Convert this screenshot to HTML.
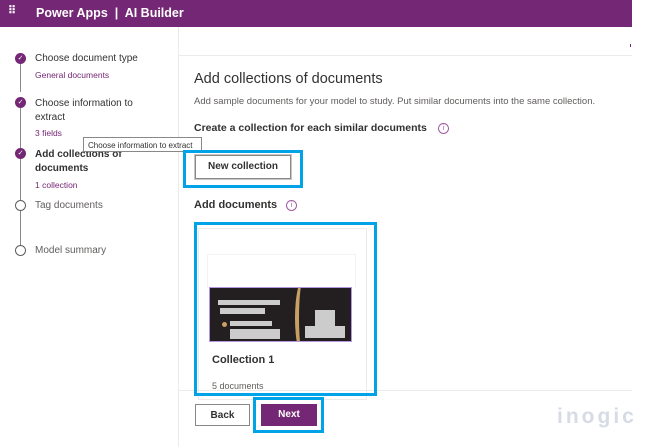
<!DOCTYPE html><html><head><style>
body{margin:0;width:660px;height:447px;background:#fff;font-family:"Liberation Sans",sans-serif;position:relative;overflow:hidden;color:#323130}
.a{position:absolute}
.hdr{left:0;top:0;width:632px;height:27px;background:#742774;color:#fff;font-size:12.5px;font-weight:bold}
.s{font-size:10px;color:#323130}
.sub{font-size:8.5px;color:#742774}
.dot{width:11px;height:11px;border-radius:50%;background:#742774;color:#fff;font-size:7px;text-align:center;line-height:11px}
.ring{width:9px;height:9px;border-radius:50%;border:1px solid #605e5c;background:#fff}
.vl{width:1px;background:#8a8886}
.box{border:3px solid #00a2e8;box-sizing:border-box}
.info{width:9px;height:9px;border:1px solid #a05aa0;border-radius:50%;font-size:7px;color:#a05aa0;text-align:center;line-height:9px}
</style></head><body>
<div class="a hdr"><span class="a" style="left:8px;top:4px;font-size:11px;letter-spacing:-1px">⠿</span><span class="a" style="left:36px;top:6px">Power Apps &nbsp;|&nbsp; AI Builder</span></div>
<div class="a" style="left:178px;top:27px;width:1px;height:420px;background:#edebe9"></div>
<div class="a" style="left:178px;top:55px;width:454px;height:1px;background:#edebe9"></div>
<div class="a" style="left:630px;top:44px;width:1px;height:3px;background:#742774"></div>
<div class="a" style="left:178px;top:390px;width:454px;height:1px;background:#edebe9"></div>

<div class="a vl" style="left:20px;top:64px;height:28px"></div>
<div class="a vl" style="left:20px;top:108px;height:44px"></div>
<div class="a vl" style="left:20px;top:158px;height:46px"></div>
<div class="a vl" style="left:20px;top:211px;height:36px"></div>
<div class="a dot" style="left:15px;top:53px">✓</div>
<div class="a dot" style="left:15px;top:97px">✓</div>
<div class="a dot" style="left:15px;top:148px">✓</div>
<div class="a ring" style="left:15px;top:200px"></div>
<div class="a ring" style="left:15px;top:245px"></div>
<div class="a s" style="left:35px;top:53px">Choose document type</div>
<div class="a sub" style="left:35px;top:70px">General documents</div>
<div class="a s" style="left:35px;top:97px;line-height:14px">Choose information to<br>extract</div>
<div class="a sub" style="left:35px;top:128px">3 fields</div>
<div class="a s" style="left:35px;top:148px;line-height:14px;font-weight:bold">Add collections of<br>documents</div>
<div class="a sub" style="left:35px;top:180px">1 collection</div>
<div class="a s" style="left:35px;top:200px;color:#605e5c">Tag documents</div>
<div class="a s" style="left:35px;top:245px;color:#605e5c">Model summary</div>
<div class="a" style="left:83px;top:137px;width:119px;height:15px;border:1px solid #8a8886;background:#fff;font-size:8px;line-height:15px;padding-left:4px;box-sizing:border-box">Choose information to extract</div>

<div class="a" style="left:194px;top:71px;font-size:14.5px">Add collections of documents</div>
<div class="a" style="left:194px;top:96px;font-size:9.5px;color:#605e5c">Add sample documents for your model to study. Put similar documents into the same collection.</div>
<div class="a" style="left:194px;top:122px;font-size:10.5px;font-weight:bold">Create a collection for each similar documents</div>
<div class="a info" style="left:438px;top:123px">i</div>
<div class="a box" style="left:183px;top:150px;width:120px;height:38px"></div>
<div class="a" style="left:195px;top:155px;width:94px;height:22px;border:1px solid #8a8886;box-shadow:0 0 0 1px #c8c6c4;font-size:10px;font-weight:bold;text-align:center;line-height:22px">New collection</div>
<div class="a" style="left:194px;top:199px;font-size:11px;font-weight:bold">Add documents</div>
<div class="a info" style="left:286px;top:200px">i</div>

<div class="a" style="left:198px;top:228px;width:167px;height:170px;border:1px solid #edebe9"></div>
<div class="a" style="left:207px;top:254px;width:147px;height:33px;border:1px solid #f3f2f1;border-bottom:none"></div>
<div class="a" style="left:209px;top:287px;width:143px;height:55px;background:#231f20;border:1px solid #b497e0;box-sizing:border-box;overflow:hidden">
<div class="a" style="left:85px;top:-10px;width:14px;height:80px;border-left:4px solid #c9a063;border-radius:50%"></div>
<div class="a" style="left:8px;top:12px;width:62px;height:5px;background:#ccc"></div>
<div class="a" style="left:10px;top:20px;width:45px;height:6px;background:#ccc"></div>
<div class="a" style="left:20px;top:33px;width:42px;height:5px;background:#ccc"></div>
<div class="a" style="left:20px;top:41px;width:50px;height:10px;background:#ccc"></div>
<div class="a" style="left:12px;top:34px;width:5px;height:5px;border-radius:50%;background:#c9a063"></div>
<div class="a" style="left:105px;top:22px;width:20px;height:18px;background:#ccc"></div>
<div class="a" style="left:95px;top:38px;width:40px;height:12px;background:#ccc"></div>
</div>
<div class="a" style="left:212px;top:354px;font-size:11px;font-weight:bold">Collection 1</div>
<div class="a" style="left:212px;top:381px;font-size:9px;color:#605e5c">5 documents</div>
<div class="a box" style="left:194px;top:222px;width:183px;height:174px"></div>

<div class="a" style="left:195px;top:404px;width:55px;height:22px;border:1px solid #8a8886;font-size:10px;font-weight:bold;text-align:center;line-height:22px;box-sizing:border-box">Back</div>
<div class="a box" style="left:253px;top:397px;width:71px;height:36px"></div>
<div class="a" style="left:261px;top:404px;width:56px;height:22px;background:#742774;color:#fff;font-size:10px;font-weight:bold;text-align:center;line-height:22px">Next</div>
<div class="a" style="left:557px;top:405px;font-size:21px;font-weight:bold;color:#d7dbe6;letter-spacing:3px">inogic</div>
</body></html>
